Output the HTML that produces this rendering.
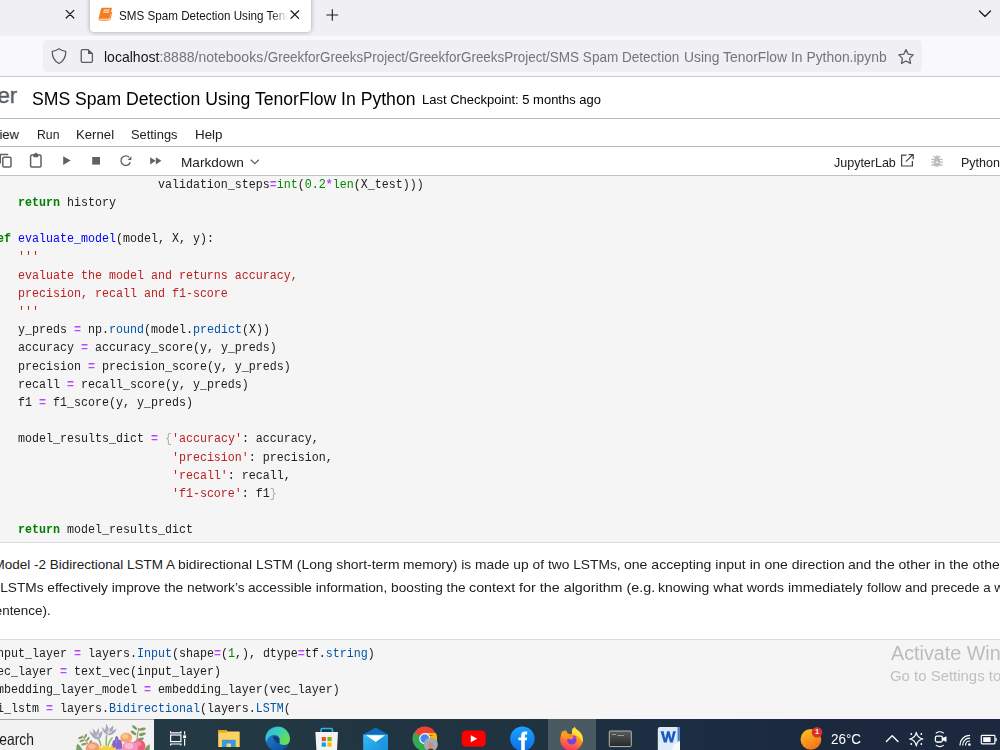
<!DOCTYPE html>
<html><head><meta charset="utf-8"><title>SMS Spam Detection Using TenorFlow In Python</title>
<style>
*{box-sizing:border-box;margin:0;padding:0}
html,body{width:1000px;height:750px;overflow:hidden;background:#fff;font-family:"Liberation Sans",sans-serif;color:#15141a}
.abs{position:absolute}
.t{position:absolute;white-space:pre;line-height:1;transform-origin:0 0}
#tabbar{left:0;top:0;width:1000px;height:36px;background:#f0f0f4}
#tab{left:90px;top:-6px;width:221px;height:38px;background:#fff;border-radius:4px;box-shadow:0 0 4px rgba(0,0,0,.35)}
#nav{left:0;top:36px;width:1000px;height:41px;background:#f9f9fb;border-bottom:1px solid #c9c9cf}
#url{left:43px;top:40px;width:879px;height:32px;background:#f0f0f4;border-radius:4px}
#hdr{left:0;top:77px;width:1000px;height:42px;background:#fff;border-bottom:1px solid #b8b8b8}
#menu{left:0;top:119px;width:1000px;height:28px;background:#fff;border-bottom:1px solid #b8b8b8}
#tool{left:0;top:147px;width:1000px;height:29px;background:#fff;border-bottom:1px solid #c0c0c0}
#c1{left:0;top:176px;width:1000px;height:367px;background:#f5f5f5;border-bottom:1px solid #dcdcdc}
#md{left:0;top:543px;width:1000px;height:96px;background:#fff}
#c2{left:0;top:639px;width:1000px;height:81px;background:#f5f5f5;border-top:1px solid #dcdcdc}
pre.code{position:absolute;font-family:"Liberation Mono",monospace;font-size:12px;line-height:18.2px;color:#212121;white-space:pre;transform-origin:0 0;transform:scaleX(0.9715)}
.k{color:#008000;font-weight:bold}.f{color:#0000ff}.s{color:#ba2121}.o{color:#b348ff;font-weight:bold}.n{color:#008800}.p{color:#0055aa}.b{color:#b0b09a}
#task{left:0;top:719px;width:1000px;height:31px;background:linear-gradient(to right,#243a44 15%,#1f3340 50%,#1c2f42 65%,#1b283e 85%)}
#search{left:0;top:719px;width:153.7px;height:31px;background:#f2f2f2;border-top:1px solid #a6a6a6}
#ffhl{left:547.5px;top:719px;width:48px;height:31px;background:#4a5a63}
svg{position:absolute;overflow:visible}

</style></head><body>
<div class="abs" id="tabbar"></div>
<div class="abs" id="tab"></div>
<div class="abs" id="nav"></div>
<div class="abs" id="url"></div>
<div class="abs" id="hdr"></div>
<div class="abs" id="menu"></div>
<div class="abs" id="tool"></div>
<div class="abs" id="c1"></div>
<pre class="code" style="left:-10.4px;top:175.55px">                        validation_steps<span class="o">=</span><span class="n">int</span>(<span class="n">0.2</span><span class="o">*</span><span class="n">len</span>(X_test)))
    <span class="k">return</span> history

<span class="k">def</span> <span class="f">evaluate_model</span>(model, X, y):
    <span class="s">'''</span>
<span class="s">    evaluate the model and returns accuracy,</span>
<span class="s">    precision, recall and f1-score</span>
<span class="s">    '''</span>
    y_preds <span class="o">=</span> np.<span class="p">round</span>(model.<span class="p">predict</span>(X))
    accuracy <span class="o">=</span> accuracy_score(y, y_preds)
    precision <span class="o">=</span> precision_score(y, y_preds)
    recall <span class="o">=</span> recall_score(y, y_preds)
    f1 <span class="o">=</span> f1_score(y, y_preds)

    model_results_dict <span class="o">=</span> <span class="b">{</span><span class="s">'accuracy'</span>: accuracy,
                          <span class="s">'precision'</span>: precision,
                          <span class="s">'recall'</span>: recall,
                          <span class="s">'f1-score'</span>: f1<span class="b">}</span>

    <span class="k">return</span> model_results_dict</pre>
<div class="abs" id="md"></div>
<div class="abs" id="c2"></div>
<pre class="code" style="left:-10.4px;top:645.05px">input_layer <span class="o">=</span> layers.<span class="p">Input</span>(shape<span class="o">=</span>(<span class="n">1</span>,), dtype<span class="o">=</span>tf.<span class="p">string</span>)
vec_layer <span class="o">=</span> text_vec(input_layer)
embedding_layer_model <span class="o">=</span> embedding_layer(vec_layer)
bi_lstm <span class="o">=</span> layers.<span class="p">Bidirectional</span>(layers.<span class="p">LSTM</span>(</pre>
<div class="abs" id="task"></div>
<div class="abs" id="ffhl"></div>
<div class="abs" id="search"></div>
<!-- taskbar icons -->
<svg style="left:0;top:719px" width="1000" height="31" viewBox="0 719 1000 31">
 <defs>
  <linearGradient id="edg1" x1="0" y1="0" x2="1" y2="0.6"><stop offset="0" stop-color="#2cb7f3"/><stop offset="0.55" stop-color="#3bd0b0"/><stop offset="1" stop-color="#6be04a"/></linearGradient>
  <linearGradient id="edg2" x1="0" y1="0" x2="0.7" y2="1"><stop offset="0" stop-color="#2a8be6"/><stop offset="1" stop-color="#0b4f9e"/></linearGradient>
  <linearGradient id="sun" x1="0.2" y1="0" x2="0.7" y2="1"><stop offset="0" stop-color="#fcc21f"/><stop offset="1" stop-color="#f26f1c"/></linearGradient>
  <linearGradient id="ffg" x1="0.7" y1="0" x2="0.35" y2="1"><stop offset="0" stop-color="#ffe53b"/><stop offset="0.45" stop-color="#ff9420"/><stop offset="1" stop-color="#ff2a6d"/></linearGradient>
  <linearGradient id="mailg" x1="0" y1="0" x2="1" y2="1"><stop offset="0" stop-color="#35c0f5"/><stop offset="1" stop-color="#1590dc"/></linearGradient>
  <linearGradient id="termg" x1="0" y1="0" x2="0" y2="1"><stop offset="0" stop-color="#5c5c5c"/><stop offset="1" stop-color="#262626"/></linearGradient>
  <linearGradient id="fbg" x1="0" y1="0" x2="0" y2="1"><stop offset="0" stop-color="#1aa3ff"/><stop offset="1" stop-color="#0a6fe8"/></linearGradient>
  <clipPath id="chc"><circle cx="424.8" cy="738.6" r="12.3"/></clipPath>
 </defs>
 <!-- flowers in search box -->
 <g>
  <path d="M82 735.500 L88.500 744.500" stroke="#8a6a50" stroke-width="0.800" fill="none"/>
  <g fill="#7f9c62">
   <ellipse cx="80.600" cy="737.600" rx="2.600" ry="1.100" transform="rotate(-20 80.600 737.600)"/>
   <ellipse cx="85.600" cy="736" rx="2.400" ry="1.100" transform="rotate(-65 85.600 736)"/>
   <ellipse cx="82" cy="740.800" rx="2.700" ry="1.100" transform="rotate(-15 82 740.800)"/>
   <ellipse cx="88" cy="739" rx="2.600" ry="1.100" transform="rotate(-60 88 739)"/>
   <ellipse cx="84" cy="744.200" rx="2.900" ry="1.200" transform="rotate(-12 84 744.200)"/>
   <ellipse cx="90.500" cy="742.200" rx="2.400" ry="1.100" transform="rotate(-60 90.500 742.200)"/>
   <path d="M76.300 750 Q76 745.500 77.500 743.800 Q81 746 82.500 750Z"/>
   <path d="M144.500 750 Q146.500 745.500 149.600 744.200 Q150.200 747 149.500 750Z"/>
  </g>
  <path d="M138.600 728 L136.800 740.500" stroke="#8a6a50" stroke-width="0.800" fill="none"/>
  <g fill="#7c9b5c">
   <ellipse cx="134.600" cy="727.600" rx="3.100" ry="1.300" transform="rotate(40 134.600 727.600)"/>
   <ellipse cx="142.300" cy="729.200" rx="3.400" ry="1.400" transform="rotate(-12 142.300 729.200)"/>
   <ellipse cx="133.600" cy="732.800" rx="3.300" ry="1.400" transform="rotate(35 133.600 732.800)"/>
   <ellipse cx="142.300" cy="734.200" rx="3.500" ry="1.500" transform="rotate(-15 142.300 734.200)"/>
   <ellipse cx="140.800" cy="739" rx="3.200" ry="1.300" transform="rotate(-8 140.800 739)"/>
  </g>
  <path d="M98.500 739 Q100.500 742 100.800 746 M106.500 735 Q106 740 106.300 746 M112.500 737.500 Q109 741 108 746" stroke="#8cba62" stroke-width="1.500" fill="none"/>
  <path d="M89.200 730.600 L93.500 734 L92.600 728.200 L96.200 732.600 L98.600 727.800 L99.400 733.200 L102.600 730.400 Q102.400 737 98.800 739.400 Q92.500 740.500 89.200 730.600Z" fill="#a9a9ba"/>
  <path d="M94 733.500 L96.200 736.500 L98.600 731 L99 737 Q96.500 738.500 94 733.500Z" fill="#d3d3dc"/>
  <path d="M101.600 726.600 L105.200 730.200 L106.400 723.400 L109 729.400 L113.400 725.200 L112.800 730.600 L116.800 728.800 Q114.500 734.600 109.600 735.200 Q103.500 735.400 101.600 726.600Z" fill="#a6a6b8"/>
  <path d="M105.800 729.500 L107 733 L109.200 727.500 L110.400 732.500 L113 729 Q112 733.500 108.500 734Q106 733.500 105.800 729.500Z" fill="#d6d6de"/>
  <ellipse cx="126.200" cy="737.800" rx="5.900" ry="5" fill="#f5a766"/>
  <ellipse cx="125.200" cy="736.400" rx="3" ry="2.400" fill="#fbc690"/>
  <path d="M116.600 735.800 Q118.600 737 118.400 739.600 Q121.400 739.400 121.600 742.200 Q123 745 121.800 749.500 H112.600 Q110.600 745.500 112.600 743 Q112.400 740 115 740 Q114.600 737 116.600 735.800Z" fill="#8a64c6"/>
  <path d="M116.600 738 Q117.600 741 116.600 744 Q115.200 741 116.600 738Z" fill="#a98be0"/>
  <ellipse cx="139" cy="746.200" rx="6.400" ry="6.800" fill="#ec5c7c"/>
  <ellipse cx="138" cy="743.800" rx="3.300" ry="2.600" fill="#f48aa0"/>
  <ellipse cx="130" cy="748" rx="8.200" ry="6.600" fill="#f591ba"/>
  <ellipse cx="129" cy="746" rx="4.400" ry="3" fill="#fbb9d3"/>
  <ellipse cx="92.800" cy="749" rx="7.200" ry="7" fill="#f29c70"/>
  <ellipse cx="92" cy="746.500" rx="3.600" ry="2.600" fill="#f8bd98"/>
  <path d="M98.600 750 L100 746.500 L102.300 748 L103.800 744.800 L106 747.200 L108 744.400 L109.800 747.200 L112.200 745 L113.200 748 L115.600 746.800 L116 750Z" fill="#f6d040"/>
 </g>
 <!-- task view -->
 <g fill="none" stroke="#fff" stroke-width="1.2">
  <rect x="170.600" y="735" width="10.300" height="6.600"/>
  <path d="M170.600 731.200 V732.800 H180.900 V731.200 M170.600 745.600 V744 H180.900 V745.600"/>
  <path d="M184.600 731.200 V734.600 M184.600 739 V745.800"/>
 </g>
 <rect x="183.200" y="735.300" width="2.900" height="2.900" fill="#fff"/>
 <!-- file explorer -->
 <path d="M218.200 730.600 Q218.200 730 218.800 730 H226.200 L227.800 731.600 H239 Q239.700 731.600 239.700 732.300 V747 H218.200Z" fill="#fbd35f"/>
 <path d="M218.200 730.600 Q218.200 730 218.800 730 H226.200 L227.800 731.600 L226.800 732.600 H218.200Z" fill="#e9a417"/>
 <path d="M222 739.800 H235.700 V747 H231 V743.600 H226.600 V747 H222Z" fill="#3b97e3"/>
 <!-- edge -->
 <circle cx="277.700" cy="738.700" r="12.300" fill="url(#edg2)"/>
 <path d="M265.600 737 A12.300 12.300 0 0 1 290 738.500 Q290 744.500 284.500 745 Q279 745 279 741.500 Q280.500 739 279 737 Q276.500 734 272.500 735 Q267.500 736.500 266.500 742 Q265.200 739.500 265.600 737Z" fill="url(#edg1)"/>
 <path d="M272.500 736.500 Q277.500 735 279.500 739 Q279 741.500 280 743 Q277 743.500 275.500 741.500 Q274 739.500 272.500 736.500Z" fill="#143d6e"/>
 <!-- store -->
 <path d="M321 733.500 V730 Q321 728.500 322.500 728.500 H331 Q332.500 728.500 332.500 730 V733.500" fill="none" stroke="#2bb4ec" stroke-width="1.600"/>
 <path d="M315.400 732 H338 L337 750 H316.400Z" fill="#f3f3f3"/>
 <rect x="321.700" y="737" width="4.200" height="4.200" fill="#f25022"/><rect x="327.400" y="737" width="4.200" height="4.200" fill="#7fba00"/>
 <rect x="321.700" y="742.500" width="4.200" height="4.200" fill="#00a4ef"/><rect x="327.400" y="742.500" width="4.200" height="4.200" fill="#ffb900"/>
 <!-- mail -->
 <path d="M363.200 734.400 L375.600 727.600 L388 734.400Z" fill="#0f6cbd"/>
 <rect x="363.200" y="734.400" width="24.800" height="16" fill="url(#mailg)"/>
 <path d="M366 735.200 H385.200 L375.800 742Z" fill="#fff"/>
 <path d="M375.800 742 L385.200 735.200 L388 736 V750 H384Z" fill="#1b93de" opacity="0.55"/>
 <!-- chrome -->
 <g clip-path="url(#chc)">
  <circle cx="424.800" cy="738.600" r="12.300" fill="#ea4335"/>
  <path d="M424.800 738.600 L414 732.500 L410 738 L412 752 H428 L431 742Z" fill="#34a853"/>
  <path d="M424.800 738.600 L436 734.200 H440 V752 H426 L430.500 742Z" fill="#fbbc05"/>
  <path d="M424.800 733 H438 V735 H424.800Z" fill="#fbbc05"/>
 </g>
 <circle cx="424.800" cy="738.600" r="5.600" fill="#fff"/><circle cx="424.800" cy="738.600" r="4.400" fill="#4285f4"/>
 <circle cx="430.800" cy="744.500" r="7" fill="#a3acb0"/><ellipse cx="430.800" cy="745.500" rx="2.600" ry="3.600" fill="#c98f7a"/><path d="M426 751 Q430.800 746 435.600 751Z" fill="#3a3a3a"/>
 <!-- youtube -->
 <rect x="461.700" y="730.600" width="24" height="16.200" rx="4.200" fill="#ff0000"/>
 <path d="M470.800 735.200 L477.200 738.700 L470.800 742.200Z" fill="#fff"/>
 <!-- facebook -->
 <circle cx="522.400" cy="738.600" r="12.200" fill="url(#fbg)"/>
 <path d="M521.200 750 V740.200 H518.400 V737.400 H521.200 V735.200 Q521.200 731.600 525 731.600 H527.200 V734.400 H525.800 Q524.800 734.400 524.800 735.600 V737.400 H527.200 L526.800 740.200 H524.800 V750Z" fill="#fff"/>
 <!-- firefox -->
 <circle cx="571.500" cy="739.600" r="11.300" fill="url(#ffg)"/>
 <path d="M565.200 726.500 H573.200 Q571.600 729.500 572.200 733.200 L569.600 735.200 L566.200 733.400 Q564.600 730 565.200 726.500Z" fill="#4a5a63"/>
 <path d="M572.200 733.200 Q571.400 729.400 574.800 726.800 Q576 730 579.600 732.600 Q583.800 736.400 582.600 742.600 Q580.400 736.200 575.600 735.200Z" fill="#ffe03a"/>
 <path d="M561 735.500 Q561.200 732.200 562.800 730.400 Q563.200 732 564.600 732.800 Q565.200 731.200 566.600 730.600 Q566.600 732.600 568 733.800 Q569.400 733.600 571 734.600 L566.500 738.500Z" fill="#ff9a1f"/>
 <circle cx="571.800" cy="739.900" r="4.700" fill="#7542e5"/>
 <path d="M565.800 737.200 Q569 734.400 573.400 735 Q576.200 735.600 577.200 737.600 Q573.200 737 571.600 739.800 Q569.800 738.400 567.200 739.200Z" fill="#ff8a1f"/>
 <path d="M573 735.600 Q575.800 735.800 577 737.600 Q574.400 737.200 573 738.200Z" fill="#b13be0"/>
 <!-- terminal -->
 <rect x="609.300" y="731" width="22" height="15.600" rx="0.800" fill="url(#termg)" stroke="#b5b5b5" stroke-width="1"/>
 <path d="M612 734.500 H616 M617.500 735.500 H624" stroke="#9a9a9a" stroke-width="1.200" fill="none"/>
 <!-- word -->
 <path d="M660 727 H679.600 V750 H657.800 V729.200 Q657.800 727 660 727Z" fill="#dfeaf8"/>
 <path d="M677.600 727 H679.600 V740 L677.600 742Z" fill="#3d7bd6"/>
 <path d="M673.500 745 L680 741 V750 H672Z" fill="#f7f9fc"/>
 <path d="M660.600 731.200 H663.600 L665.300 738.800 L667.100 731.200 H669.600 L671.400 738.800 L673 731.200 H675.900 L672.800 742.600 H670 L668.350 736 L666.700 742.600 H663.900Z" fill="#1c5bbf"/>
 <!-- weather -->
 <circle cx="810.900" cy="739.400" r="10.400" fill="url(#sun)"/>
 <circle cx="817" cy="732.200" r="5.300" fill="#d9302a"/>
 <!-- tray -->
 <g fill="none" stroke="#fff" stroke-width="1.300" stroke-linejoin="round" stroke-linecap="round">
  <path d="M886.400 741.400 L892.200 735.800 L898 741.400" stroke-width="1.400"/>
  <path d="M916.300 732.400 Q917.300 738 923 739 Q917.300 740 916.300 745.800 Q915.300 740 909.600 739 Q915.300 738 916.300 732.400Z" stroke-width="1.200"/>
  <rect x="935.400" y="736.200" width="7" height="5.800" rx="1.500"/>
  <path d="M942.600 738.200 L946.200 736.800 V741.400 L942.600 740Z" fill="#fff" stroke-width="0.600"/>
  <path d="M936.200 733 Q939.800 730.600 943.400 733 M936.200 745.400 Q939.800 747.800 943.400 745.400" stroke-width="1.100"/>
  <path d="M965.600 745 A4 4 0 0 1 969.600 741 M962.800 745 A6.800 6.800 0 0 1 969.600 738.200 M960 745 A9.600 9.600 0 0 1 969.600 735.400" stroke-width="1.200"/>
  <rect x="981.300" y="735.400" width="13.600" height="8.400" rx="0.800" stroke-width="1.200"/>
 </g>
 <g fill="#fff">
  <circle cx="911.300" cy="734" r="0.900"/><circle cx="921.300" cy="734" r="0.900"/><circle cx="911.300" cy="744" r="0.900"/><circle cx="921.300" cy="744" r="0.900"/>
  <circle cx="969.400" cy="744.600" r="1.300"/>
  <rect x="983.200" y="737.200" width="7.400" height="4.800"/>
  <rect x="995.400" y="738" width="1.300" height="3.200"/>
 </g>
</svg>
<div class="abs" style="left:118px;top:4px;width:170.5px;height:24px;overflow:hidden;-webkit-mask-image:linear-gradient(to right,#000 153px,transparent 170px);mask-image:linear-gradient(to right,#000 153px,transparent 170px)"><div class="t" style="left:1.04px;top:5.67px;font-size:12.2px;color:#15141a;transform:scaleX(0.9564);">SMS Spam Detection Using TenorFlow In Python</div></div>
<div class="t" style="left:104.03px;top:49.73px;font-size:14.5px;color:#73737d;transform:scaleX(0.9681);"><span style="color:#15141a">localhost</span>:8888/notebooks</div>
<div class="t" style="left:263.60px;top:49.73px;font-size:14.5px;color:#73737d;transform:scaleX(0.9263);">/GreekforGreeksProject</div>
<div class="t" style="left:405.00px;top:49.73px;font-size:14.5px;color:#73737d;transform:scaleX(0.9263);">/GreekforGreeksProject</div>
<div class="t" style="left:546.40px;top:49.73px;font-size:14.5px;color:#73737d;transform:scaleX(0.9338);">/SMS Spam Detection </div>
<div class="t" style="left:684.04px;top:49.73px;font-size:14.5px;color:#73737d;transform:scaleX(0.9571);">Using TenorFlow In Python.ipynb</div>
<div class="t" style="left:-49.40px;top:84.91px;font-size:22.2px;color:#5c5c5c;transform:scaleX(1.0000);-webkit-text-stroke:0.35px #5c5c5c;">jupyter</div>
<div class="t" style="left:32.49px;top:91.09px;font-size:17.5px;color:#000;transform:scaleX(1.0066);">SMS Spam Detection Using TenorFlow In Python</div>
<div class="t" style="left:422.49px;top:93.66px;font-size:12.8px;color:#000;transform:scaleX(1.0143);">Last Checkpoint: 5 months ago</div>
<div class="t" style="left:-9.00px;top:128.10px;font-size:13px;color:#212121;transform:scaleX(1.0000);">View</div>
<div class="t" style="left:36.56px;top:128.10px;font-size:13px;color:#212121;transform:scaleX(0.9409);">Run</div>
<div class="t" style="left:76.24px;top:128.10px;font-size:13px;color:#212121;transform:scaleX(1.0139);">Kernel</div>
<div class="t" style="left:131.01px;top:128.10px;font-size:13px;color:#212121;transform:scaleX(0.9891);">Settings</div>
<div class="t" style="left:195.22px;top:128.10px;font-size:13px;color:#212121;transform:scaleX(1.0300);">Help</div>
<div class="t" style="left:181.20px;top:155.75px;font-size:13px;color:#212121;transform:scaleX(1.0474);">Markdown</div>
<div class="t" style="left:833.50px;top:156.00px;font-size:13px;color:#212121;transform:scaleX(0.9609);">JupyterLab</div>
<div class="t" style="left:960.54px;top:156.00px;font-size:13px;color:#212121;transform:scaleX(0.9615);">Python 3 (ipykernel)</div>
<div class="t" style="left:-6.50px;top:558.47px;font-size:13.5px;color:#212121;transform:scaleX(1.0000);">Model -2 Bidirectional LSTM A </div>
<div class="t" style="left:178.47px;top:558.47px;font-size:13.5px;color:#212121;transform:scaleX(1.0285);">bidirectional LSTM (Long short-term </div>
<div class="t" style="left:403.48px;top:558.47px;font-size:13.5px;color:#212121;transform:scaleX(1.0218);">memory) is made up of two LSTMs, </div>
<div class="t" style="left:623.96px;top:558.47px;font-size:13.5px;color:#212121;transform:scaleX(1.0398);">one accepting input in one direction </div>
<div class="t" style="left:847.96px;top:558.47px;font-size:13.5px;color:#212121;transform:scaleX(1.0366);">and the other in the other.</div>
<div class="t" style="left:-11.68px;top:581.37px;font-size:13.5px;color:#212121;transform:scaleX(1.0138);">BiLSTMs effectively improve the network’s </div>
<div class="t" style="left:248.39px;top:581.37px;font-size:13.5px;color:#212121;transform:scaleX(1.0141);">accessible information, boosting the </div>
<div class="t" style="left:468.94px;top:581.37px;font-size:13.5px;color:#212121;transform:scaleX(1.0601);">context for the algorithm (e.g. </div>
<div class="t" style="left:657.96px;top:581.37px;font-size:13.5px;color:#212121;transform:scaleX(1.0372);">knowing what words immediately </div>
<div class="t" style="left:866.50px;top:581.37px;font-size:13.5px;color:#212121;transform:scaleX(0.9920);">follow and precede a word in a</div>
<div class="t" style="left:-12.10px;top:603.57px;font-size:13.5px;color:#212121;transform:scaleX(0.9936);">sentence).</div>
<div class="t" style="left:891.00px;top:644.16px;font-size:19.3px;color:#bcbcbc;transform:scaleX(1.0236);">Activate Windows</div>
<div class="t" style="left:889.50px;top:668.05px;font-size:15px;color:#c0c0c0;transform:scaleX(0.9955);">Go to Settings to activate Windows.</div>
<div class="t" style="left:-9.58px;top:731.23px;font-size:16.5px;color:#1a1a1a;transform:scaleX(0.8397);">Search</div>
<div class="t" style="left:830.73px;top:730.96px;font-size:15.4px;color:#fff;transform:scaleX(0.8727);">26°C</div>
<div class="t" style="left:814.50px;top:728.23px;font-size:8px;color:#fff;transform:scaleX(0.9000);font-weight:bold;">1</div>
<!-- browser chrome icons -->
<svg style="left:0;top:0" width="1000" height="80" viewBox="0 0 1000 80">
 <g stroke="#1c1b22" stroke-width="1.25" stroke-linecap="round" fill="none">
  <path d="M66.200 10.400 L73.800 18 M73.800 10.400 L66.200 18"/>
  <path d="M291 10.800 L298.600 18.400 M298.600 10.800 L291 18.400"/>
  <path d="M326.400 15 H338.200 M332.300 9.200 V20.800" stroke-width="1.100" stroke-linecap="butt"/>
  <path d="M979.5 11 L985 16.5 L990.5 11" stroke-linejoin="round"/>
 </g>
 <!-- notebook favicon -->
 <g transform="translate(98.5,7.5)">
  <path d="M4.2 0.3 H12.3 Q13.6 0.3 13.3 1.6 L11.2 10 Q10.9 11.2 9.6 11.2 H1.2 Q0 11.2 0.3 10 L2.5 1.6 Q2.9 0.3 4.2 0.3Z" fill="#f57c1f"/>
  <path d="M0.4 11 Q0.2 12.6 1.6 12.6 H10 Q11.3 12.6 11.7 11.2 L13.3 4.5" fill="none" stroke="#f57c1f" stroke-width="1"/>
  <path d="M5.2 2.6 H11 M4.7 4.6 H10.5" stroke="#fff" stroke-width="1" />
 </g>
 <!-- shield -->
 <path d="M59 48.8 C61.5 50.6 63.8 51.2 65.8 51.4 C65.8 57 63.8 61 59 63.5 C54.2 61 52.2 57 52.2 51.4 C54.2 51.2 56.5 50.6 59 48.8Z" fill="none" stroke="#5b5b66" stroke-width="1.3" stroke-linejoin="round"/>
 <!-- page -->
 <path d="M82.6 49.6 H88.2 L92.4 53.8 V61 Q92.4 62.4 91 62.4 H82.6 Q81.2 62.4 81.2 61 V51 Q81.2 49.6 82.6 49.6Z" fill="none" stroke="#5b5b66" stroke-width="1.3" stroke-linejoin="round"/>
 <path d="M88 49.4 L92.6 54 H88Z" fill="#5b5b66"/>
 <!-- star -->
 <path d="M906 49.6 L908.2 54.2 L913.2 54.9 L909.6 58.4 L910.5 63.4 L906 61 L901.5 63.4 L902.4 58.4 L898.8 54.9 L903.8 54.2Z" fill="none" stroke="#5b5b66" stroke-width="1.3" stroke-linejoin="round"/>
</svg>
<!-- jupyter toolbar icons -->
<svg style="left:0;top:147px" width="1000" height="29" viewBox="0 147 1000 29">
 <g fill="none" stroke="#616161" stroke-width="1.5" stroke-linejoin="round">
  <rect x="2.8" y="157.2" width="8.2" height="9.8" rx="1.3"/>
  <path d="M-1 154.6 H8.2 M0.3 154 V163.5"/>
  <rect x="30.600" y="155" width="10.400" height="12" rx="1.200"/>
  <path d="M130.3 162.3 A4.8 4.8 0 1 1 129.2 157.3" stroke-width="1.4"/>
 </g>
 <path d="M33.400 153.800 H38.200 V157.200 H33.400Z M34.800 153.800 a1.100 1.100 0 0 1 2.200 0" fill="#616161"/>
 <path d="M131.4 156.2 V160 H127.6Z" fill="#616161"/>
 <path d="M63.2 156.2 L70.6 160.6 L63.2 165Z" fill="#616161"/>
 <rect x="92.2" y="157" width="7.8" height="7.6" fill="#616161"/>
 <path d="M150.2 157.2 L155.6 160.8 L150.2 164.4Z M155.8 157.2 L161.4 160.8 L155.8 164.4Z" fill="#616161"/>
 <path d="M250.8 159.8 L254.8 163.6 L258.8 159.8" fill="none" stroke="#616161" stroke-width="1.3"/>
 <!-- external link -->
 <g fill="none" stroke="#424242" stroke-width="1.2">
  <path d="M906.5 155.2 H901.6 V166 H912.4 V161"/>
  <path d="M905.8 161.6 L913 154.6 M908.6 154.6 H913.2 V159.2"/>
 </g>
 <!-- bug -->
 <g fill="#bdbdbd" stroke="#bdbdbd" transform="translate(0,0.8)">
  <ellipse cx="937" cy="161.4" rx="3.3" ry="4.6" stroke="none"/>
  <path d="M934.6 156.4 L933.6 155 M939.4 156.4 L940.4 155" stroke-width="1.2" fill="none"/>
  <circle cx="937" cy="157" r="2.2" stroke="none"/>
  <path d="M931.4 158.6 H942.6 M931.2 161.4 H942.8 M931.4 164.2 H942.6" stroke-width="1.3" fill="none"/>
  <path d="M935.6 161.4 H938.4" stroke="#fff" stroke-width="1.2"/>
 </g>
</svg>

</body></html>
